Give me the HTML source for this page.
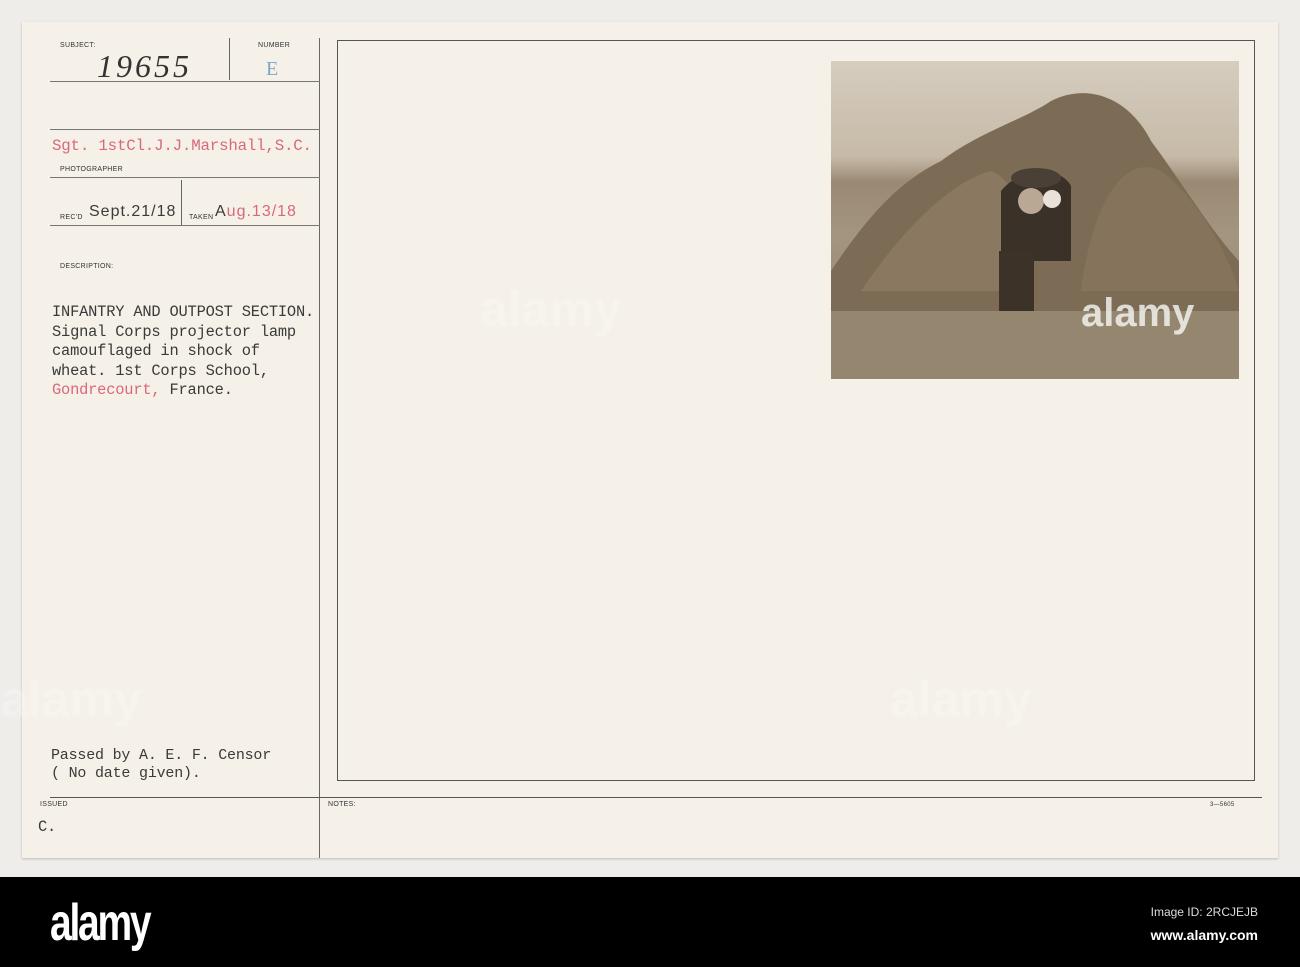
<!DOCTYPE html>
<html><head><meta charset="utf-8"><style>
*{margin:0;padding:0}
body{width:1300px;height:967px;background:#efedea;position:relative;overflow:hidden;font-family:"Liberation Mono",monospace}
.card{position:absolute;left:22px;top:22px;width:1256px;height:836px;background:#f5f1e8;box-shadow:0 1px 2px #bbb}
.a{position:absolute}
.h{position:absolute;height:1px;background:#777}
.v{position:absolute;width:1px;background:#666}
.lbl{position:absolute;font-family:"Liberation Sans",sans-serif;font-size:7px;color:#333;letter-spacing:.3px}
.t{position:absolute;font-size:15.4px;color:#3a3a3a;white-space:pre;line-height:19.5px;letter-spacing:-0.2px}
.r{color:#d9687a}
.bar{position:absolute;left:0;top:877px;width:1300px;height:90px;background:#000}
.wm{position:absolute;font-family:"Liberation Sans",sans-serif;font-weight:bold}
</style></head><body>
<div class="card"></div>
<div class="v" style="left:319px;top:38px;height:820px"></div>
<div class="v" style="left:229px;top:38px;height:42px"></div>
<div class="v" style="left:181px;top:180px;height:45px"></div>
<div class="h" style="left:50px;top:81px;width:270px"></div>
<div class="h" style="left:50px;top:129px;width:270px"></div>
<div class="h" style="left:50px;top:177px;width:270px"></div>
<div class="h" style="left:50px;top:225px;width:270px"></div>
<div class="h" style="left:50px;top:797px;width:1212px;background:#555"></div>
<div class="a" style="left:337px;top:40px;width:916px;height:739px;border:1px solid #555"></div>
<div class="lbl" style="left:60px;top:42px">SUBJECT:</div>
<div class="lbl" style="left:258px;top:42px">NUMBER</div>
<div class="a" style="left:97px;top:48px;font-family:'Liberation Serif',serif;font-style:italic;font-size:32px;color:#333;letter-spacing:3px">19655</div>
<div class="a" style="left:266px;top:58px;font-family:'Liberation Serif',serif;font-size:20px;color:#7fa6c8">E</div>
<div class="t r" style="left:52px;top:137px;font-size:15.8px">Sgt. 1stCl.J.J.Marshall,S.C.</div>
<div class="lbl" style="left:60px;top:166px">PHOTOGRAPHER</div>
<div class="lbl" style="left:60px;top:214px">REC'D</div>
<div class="t" style="left:89px;top:202px;font-size:16px;letter-spacing:1px;font-family:'Liberation Sans',sans-serif">Sept.21/18</div>
<div class="lbl" style="left:189px;top:214px">TAKEN</div>
<div class="t" style="left:215px;top:202px;font-size:16px;letter-spacing:1px;font-family:'Liberation Sans',sans-serif">A<span class="r">ug.13/18</span></div>
<div class="lbl" style="left:60px;top:263px">DESCRIPTION:</div>
<div class="t" style="left:52px;top:303px">INFANTRY AND OUTPOST SECTION.
Signal Corps projector lamp
camouflaged in shock of
wheat. 1st Corps School,
<span class="r">Gondrecourt,</span> France.</div>
<div class="t" style="left:51px;top:747px;font-size:15px;line-height:18px">Passed by A. E. F. Censor
( No date given).</div>
<div class="lbl" style="left:40px;top:801px">ISSUED</div>
<div class="lbl" style="left:328px;top:801px">NOTES:</div>
<div class="lbl" style="left:1210px;top:802px;font-size:6px">3—5605</div>
<div class="t" style="left:38px;top:818px">C.</div>
<svg class="a" style="left:831px;top:61px" width="408" height="318" viewBox="0 0 408 318">
<defs><linearGradient id="sky" x1="0" y1="0" x2="0" y2="1"><stop offset="0" stop-color="#d6cdbf"/><stop offset=".3" stop-color="#c6baa7"/><stop offset=".38" stop-color="#9a8a74"/><stop offset=".55" stop-color="#a49580"/><stop offset="1" stop-color="#8d7e69"/></linearGradient></defs>
<rect width="408" height="318" fill="url(#sky)"/>
<path d="M0 210 C40 150 70 120 110 100 C150 70 190 60 220 40 C260 20 300 40 320 80 C350 120 380 170 408 200 L408 260 L0 260Z" fill="#7d6c55"/>
<path d="M30 230 C70 170 120 120 160 110 C190 120 200 180 190 230Z" fill="#8a7860"/>
<path d="M250 230 C260 150 290 90 330 110 C370 140 400 200 408 230Z" fill="#85735b"/>
<path d="M170 130 C190 105 230 105 240 125 L240 200 L170 200Z" fill="#3a3128"/>
<ellipse cx="205" cy="117" rx="25" ry="10" fill="#4a4035"/>
<circle cx="200" cy="140" r="13" fill="#b9a894"/>
<circle cx="221" cy="138" r="9" fill="#e8e2d8"/>
<rect x="168" y="190" width="35" height="60" fill="#3d3228"/>
<path d="M0 250 L408 250 L408 318 L0 318Z" fill="#95866f"/>
<text x="250" y="265" font-family="Liberation Sans" font-weight="bold" font-size="40" fill="rgba(255,255,255,.75)">alamy</text>
</svg>
<div class="wm" style="left:480px;top:280px;font-size:50px;color:rgba(255,255,255,.25)">alamy</div>
<div class="wm" style="left:0px;top:670px;font-size:50px;color:rgba(255,255,255,.25)">alamy</div>
<div class="wm" style="left:890px;top:670px;font-size:50px;color:rgba(255,255,255,.25)">alamy</div>
<div class="bar"></div>
<div class="a" style="left:50px;top:893px;font-family:'Liberation Sans',sans-serif;font-weight:bold;font-size:52px;color:#fff;letter-spacing:-3px;transform:scaleX(.75);transform-origin:left">alamy</div>
<div class="a" style="left:1130px;top:905px;width:128px;text-align:right;font-family:'Liberation Sans',sans-serif;font-size:12px;color:#ddd">Image ID: 2RCJEJB</div>
<div class="a" style="left:1110px;top:927px;width:148px;text-align:right;font-family:'Liberation Sans',sans-serif;font-size:14px;font-weight:bold;color:#fff">www.alamy.com</div>
</body></html>
